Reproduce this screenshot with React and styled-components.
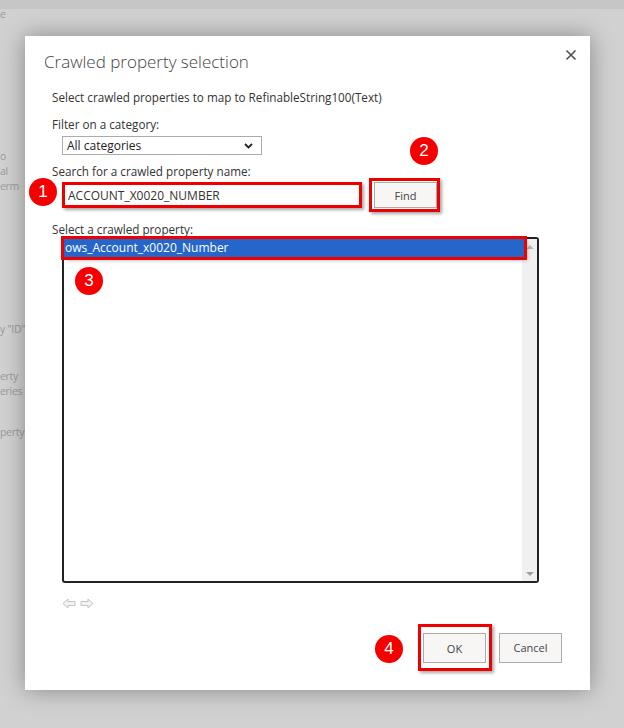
import React from 'react';
import styled, { createGlobalStyle } from 'styled-components';

const GlobalStyle = createGlobalStyle`
    html, body {
        margin: 0;
        padding: 0;
        background: #d1d1d1;
    }
    body {
        font-family: "Open Sans", "Noto Sans", "Liberation Sans", sans-serif;
        color: #333;
    }
`;

const Backdrop = styled.div`
    width: 624px;
    height: 728px;
    overflow: hidden;
    display: grid;
    grid-template-columns: 25px 565px;
    grid-template-rows: 9px 27px 654px;
    background: #d1d1d1;
`;

const TopBar = styled.div`
    grid-column: 1 / 3;
    background: #c6c6c6;
    width: 624px;
`;

const PageEdge = styled.div`
    grid-column: 1;
    grid-row: 2 / 4;
    display: flex;
    flex-direction: column;
    overflow: hidden;
    font-size: 10.5px;
    line-height: 15px;
    color: #9a9a9a;
`;

const EdgeLine = styled.div`
    margin-top: ${p => p.$gap}px;
    line-height: ${p => p.$lh || 15}px;
    white-space: nowrap;
    letter-spacing: -0.3px;
`;

const Dialog = styled.div`
    grid-column: 2;
    grid-row: 3;
    position: relative;
    background: #fff;
    box-shadow: 0 0 22px rgba(0, 0, 0, 0.35);
    display: flex;
    flex-direction: column;
    padding: 14px 28px 19px 19px;
    box-sizing: border-box;
`;

const Header = styled.div`
    display: flex;
    align-items: center;
    justify-content: space-between;
    height: 24px;
`;

const Title = styled.h1`
    margin: 0;
    font-size: 17px;
    font-weight: 300;
    color: #444;
    line-height: 24px;
`;

const CloseButton = styled.button`
    border: none;
    background: none;
    padding: 0;
    width: 12px;
    height: 12px;
    margin: -14px -15px 0 0;
    display: flex;
    cursor: pointer;
`;

const Body = styled.div`
    display: flex;
    flex-direction: column;
    padding-left: 8px;
    flex: 1;
`;

const Text = styled.div`
    font-size: 11.7px;
    line-height: 16px;
    color: #333;
    margin-top: ${p => p.$gap || 0}px;
`;

const Indented = styled.div`
    margin-left: 10px;
    margin-top: ${p => p.$gap || 0}px;
    position: relative;
`;

const SelectBox = styled.div`
    width: 200px;
    height: 19px;
    box-sizing: border-box;
    border: 1px solid #ababab;
    display: flex;
    align-items: center;
    justify-content: space-between;
    padding: 0 8px 0 4px;
    font-size: 12px;
    color: #222;
`;

const SearchRow = styled(Indented)`
    display: flex;
    align-items: center;
    height: 34px;
    gap: 7px;
`;

const Callout = styled.div`
    position: relative;
    border: 3px solid #ee0000;
    box-shadow: 2px 2px 3px rgba(0, 0, 0, 0.35);
    padding: ${p => p.$pad || '0'};
    display: flex;
`;

const TextInput = styled.input`
    width: 294px;
    height: 20px;
    box-sizing: border-box;
    border: none;
    outline: none;
    padding: 0 0 0 3px;
    font-family: inherit;
    font-size: 12px;
    color: #333;
    background: #fff;
`;

const Button = styled.button`
    width: ${p => p.$w || 63}px;
    height: ${p => p.$h || 30}px;
    border: 1px solid #ababab;
    background: #f7f6f4;
    font-family: inherit;
    font-size: 11px;
    color: #444;
    padding: 0;
    cursor: pointer;
`;

const Badge = styled.span`
    position: absolute;
    left: ${p => p.$x}px;
    top: ${p => p.$y}px;
    width: 28px;
    height: 28px;
    border-radius: 50%;
    background: #f50000;
    color: #fff;
    font-family: "Liberation Sans", Arial, sans-serif;
    font-size: 17px;
    line-height: 28px;
    text-align: center;
    z-index: 2;
`;

const ListBox = styled(Indented)`
    width: 477px;
    height: 346px;
    box-sizing: border-box;
    border: 2px solid #222;
    border-radius: 3px;
    display: flex;
`;

const Options = styled.div`
    flex: 1;
    display: flex;
    flex-direction: column;
    position: relative;
`;

const Option = styled.div`
    height: 18px;
    margin-right: -2px;
    background: #2466c9;
    color: #fff;
    font-size: 12px;
    line-height: 18px;
    padding-left: 1px;
    white-space: nowrap;
    box-shadow: 0 0 0 3px #ee0000, 3px 3px 4px rgba(0, 0, 0, 0.35);
`;

const Scrollbar = styled.div`
    width: 15px;
    background: #f0f0f0;
    display: flex;
    flex-direction: column;
    justify-content: space-between;
    align-items: center;
    padding: 6px 0 5px;
    box-sizing: border-box;
`;

const Arrow = styled.span`
    width: 0;
    height: 0;
    border-left: 4px solid transparent;
    border-right: 4px solid transparent;
    ${p => p.$down
        ? 'border-top: 4px solid #a0a0a0;'
        : 'border-bottom: 4px solid #b8b8b8;'}
`;

const Pager = styled(Indented)`
    display: flex;
    gap: 4px;
    height: 10px;
`;

const Footer = styled.div`
    display: flex;
    justify-content: flex-end;
    align-items: center;
    gap: 7px;
    margin-top: 16px;
    height: 47px;
`;

const ChevronDown = () => (
    <svg width="9" height="6" viewBox="0 0 9 6">
        <path d="M1 1 L4.5 4.5 L8 1" fill="none" stroke="#222" strokeWidth="1.8" />
    </svg>
);

const CloseIcon = () => (
    <svg width="12" height="12" viewBox="0 0 12 12">
        <path d="M1.5 1.5 L10.5 10.5 M10.5 1.5 L1.5 10.5" stroke="#555" strokeWidth="1.7" />
    </svg>
);

const PageArrow = ({ flip }) => (
    <svg width="14" height="11" viewBox="0 0 14 11" style={flip ? { transform: 'scaleX(-1)' } : undefined}>
        <path d="M1 5.5 L6 1 L6 3.5 L13 3.5 L13 7.5 L6 7.5 L6 10 Z" fill="#f2f2f2" stroke="#c4c4c4" strokeWidth="1" strokeLinejoin="round" />
    </svg>
);

export default function App() {
    return (
        <>
            <GlobalStyle />
            <Backdrop>
                <TopBar />
                <PageEdge>
                    <EdgeLine $gap={0} $lh={10}>e</EdgeLine>
                    <EdgeLine $gap={130}>o</EdgeLine>
                    <EdgeLine $gap={0}>al</EdgeLine>
                    <EdgeLine $gap={0}>erm</EdgeLine>
                    <EdgeLine $gap={128}>y "ID"</EdgeLine>
                    <EdgeLine $gap={32}>erty</EdgeLine>
                    <EdgeLine $gap={0}>eries</EdgeLine>
                    <EdgeLine $gap={26}>perty.</EdgeLine>
                </PageEdge>
                <Dialog>
                    <Header>
                        <Title>Crawled property selection</Title>
                        <CloseButton aria-label="Close"><CloseIcon /></CloseButton>
                    </Header>
                    <Body>
                        <Text $gap={15}>Select crawled properties to map to RefinableString100(Text)</Text>
                        <Text $gap={11}>Filter on a category:</Text>
                        <Indented $gap={4}>
                            <SelectBox>
                                <span>All categories</span>
                                <ChevronDown />
                            </SelectBox>
                        </Indented>
                        <Text $gap={8}>Search for a crawled property name:</Text>
                        <SearchRow $gap={-1}>
                            <Badge $x={-33} $y={0}>1</Badge>
                            <Callout>
                                <TextInput defaultValue="ACCOUNT_X0020_NUMBER" />
                            </Callout>
                            <Callout $pad="1px 0 1px 2px">
                                <Badge $x={38} $y={-44}>2</Badge>
                                <Button $w={63} $h={26}>Find</Button>
                            </Callout>
                        </SearchRow>
                        <Text $gap={9}>Select a crawled property:</Text>
                        <ListBox>
                            <Options>
                                <Option>ows_Account_x0020_Number</Option>
                                <Badge $x={11} $y={28}>3</Badge>
                            </Options>
                            <Scrollbar>
                                <Arrow />
                                <Arrow $down />
                            </Scrollbar>
                        </ListBox>
                        <Pager $gap={15}>
                            <PageArrow />
                            <PageArrow flip />
                        </Pager>
                        <Footer>
                            <Callout $pad="6px 3px 5px 2px">
                                <Badge $x={-46} $y={8}>4</Badge>
                                <Button>OK</Button>
                            </Callout>
                            <Button>Cancel</Button>
                        </Footer>
                    </Body>
                </Dialog>
            </Backdrop>
        </>
    );
}
